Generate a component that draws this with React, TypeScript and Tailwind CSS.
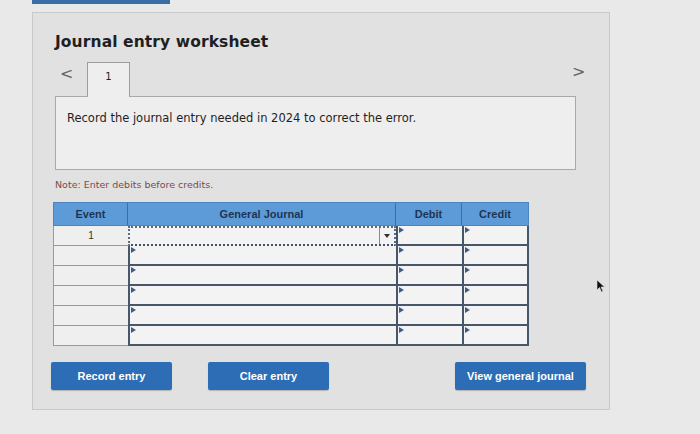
import React from "react";

const Flag = () => (
  <span className="absolute left-[1px] top-[1px] w-0 h-0 border-t-[3px] border-b-[3px] border-l-[5px] border-t-transparent border-b-transparent border-l-[#3f5d85]" />
);

function InputCell({ w, last }: { w: string; last?: boolean }) {
  return (
    <div className={`relative h-full ${w} bg-[#f3f3f3] border-b-2 border-l-2 border-[#46576a] ${last ? "border-r-2" : ""}`}>
      <Flag />
    </div>
  );
}

export default function App() {
  const rows = [0, 1, 2, 3, 4, 5];
  return (
    <div className="relative w-[700px] h-[434px] overflow-hidden bg-[#e9e9e9]" style={{ fontFamily: "'DejaVu Sans', Verdana, sans-serif" }}>
      <div className="ml-[32px] w-[138px] h-[4px] bg-[#3a6ca6]" />
      <div className="ml-[32px] mt-[8px] w-[578px] h-[398px] border border-[#c9c9c9] bg-[#e1e1e1] pl-[22px]">
        <h1 className="mt-[19px] text-[15.5px] font-bold text-[#1f1f1f] leading-[20px] tracking-[0.1px]">Journal entry worksheet</h1>
        <div className="relative h-[35px] mt-[9px]">
          <span className="absolute left-[5px] top-[5px] text-[16px] text-[#666] leading-none">&lt;</span>
          <div className="absolute left-[32px] top-[1px] w-[43px] h-[35px] border border-[#9d9d9d] border-b-0 bg-[#eeeeee] z-10 flex justify-center pt-[6px] text-[10px] text-[#222]">1</div>
          <span className="absolute left-[517px] top-[3px] text-[16px] text-[#666] leading-none">&gt;</span>
        </div>
        <div className="w-[521px] h-[74px] border border-[#a9a9a9] bg-[#eeeeee] px-[11px] pt-[13px] text-[11.5px] text-[#1e1e1e]">
          Record the journal entry needed in 2024 to correct the error.
        </div>
        <p className="mt-[9px] text-[9.5px] text-[#7c4a4f] leading-[12px]">Note: Enter debits before credits.</p>
        <div className="ml-[-2px] mt-[11px] w-[476px]" style={{ fontFamily: "'Liberation Sans', Arial, sans-serif" }}>
          <div className="flex h-[24px] bg-[#5d9bd8] border border-[#4d84bd] text-[11px] font-bold text-[#1d3553]">
            <div className="w-[74px] flex items-center justify-center border-r border-[#3f6d9f]">Event</div>
            <div className="w-[268px] flex items-center justify-center border-r border-[#3f6d9f]">General Journal</div>
            <div className="w-[66px] flex items-center justify-center border-r border-[#3f6d9f]">Debit</div>
            <div className="w-[66px] flex items-center justify-center">Credit</div>
          </div>
          {rows.map((r) => (
            <div key={r} className="flex h-[20px]">
              <div className="w-[75px] h-full border-l border-b border-[#9a9a9a] bg-[#efefef] flex items-center justify-center text-[10px] text-[#333]">
                {r === 0 ? "1" : ""}
              </div>
              {r === 0 ? (
                <div className="relative w-[268px] h-full bg-[#f3f3f3] border-2 border-dotted border-[#5a6c80] border-b-[#3f5068]">
                  <div className="absolute right-0 top-0 bottom-0 w-[15px] border-l border-[#8a8a8a] flex items-center justify-center">
                    <span className="w-0 h-0 border-l-[3px] border-r-[3px] border-t-[4px] border-l-transparent border-r-transparent border-t-[#333]" />
                  </div>
                </div>
              ) : (
                <InputCell w="w-[268px]" />
              )}
              <InputCell w="w-[66px]" />
              <InputCell w="w-[67px]" last />
            </div>
          ))}
        </div>
        <div className="flex mt-[16px] ml-[-4px] text-[11px] font-bold text-white" style={{ fontFamily: "'Liberation Sans', Arial, sans-serif" }}>
          <button className="w-[121px] h-[28px] rounded-[2px] bg-[#2d6db5] shadow-[0_1px_1px_rgba(0,0,0,0.2)]">Record entry</button>
          <button className="ml-[36px] w-[121px] h-[28px] rounded-[2px] bg-[#2d6db5] shadow-[0_1px_1px_rgba(0,0,0,0.2)]">Clear entry</button>
          <button className="ml-[126px] w-[131px] h-[28px] rounded-[2px] bg-[#2d6db5] shadow-[0_1px_1px_rgba(0,0,0,0.2)]">View general journal</button>
        </div>
      </div>
      <svg className="absolute left-[596px] top-[279px]" width="11" height="14" viewBox="0 0 11 14">
        <path d="M1 1 L1 11 L3.5 8.5 L5.5 13 L7 12.3 L5 8 L8.5 8 Z" fill="#111" stroke="#ddd" strokeWidth="0.6" />
      </svg>
    </div>
  );
}
